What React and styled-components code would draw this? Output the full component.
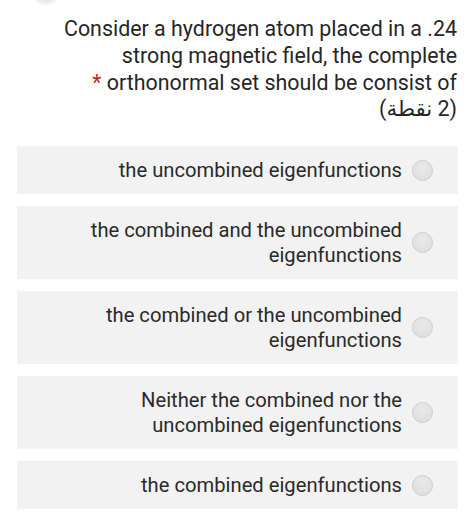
import React from 'react';
import styled, { createGlobalStyle } from 'styled-components';

const GlobalStyle = createGlobalStyle`
  html, body {
    margin: 0;
    padding: 0;
    background: #ffffff;
  }
  body {
    font-family: Roboto, "Noto Sans", Arial, sans-serif;
    color: #262626;
    overflow: hidden;
  }
`

export const Page = styled.div`
  width: 474px;
  height: 521px;
  box-sizing: border-box;
  padding: 0 16px 0 17px;
  display: flex;
  flex-direction: column;
`

// cut-off bottom of the radio above the question
export const PrevEdge = styled.div`
  width: 26px;
  height: 26px;
  margin: -22px 0 0 16px;
  border-radius: 50%;
  background: radial-gradient(circle at 50% 40%, #f1f1f1 0%, #e4e4e4 100%);
  filter: blur(1.5px);
`

export const Question = styled.div`
  margin-top: 12px;
  padding-right: 1px;
  text-align: right;
  font-size: 21.4px;
  line-height: 26.8px;
  color: #262626;
`

export const Star = styled.span`
  color: #c5221f;
`

export const Points = styled.div`
  direction: rtl;
  text-align: right;
  font-family: Roboto, "Noto Sans", "DejaVu Sans", sans-serif;
`

export const Options = styled.div`
  margin-top: 23px;
  display: flex;
  flex-direction: column;
  gap: 12px;
`

export const OptionCard = styled.label`
  display: flex;
  justify-content: flex-end;
  align-items: center;
  gap: 10px;
  padding: 11.5px 25px 11.5px 16px;
  background: #f2f2f2;
  cursor: pointer;
`

export const OptionText = styled.span`
  max-width: 335px;
  text-align: right;
  font-size: 20.2px;
  line-height: 25px;
  color: #2a2a2a;
`

export const Radio = styled.span`
  flex: none;
  width: 19px;
  height: 19px;
  border-radius: 50%;
  border: 1px solid #cdcdcd;
  background: radial-gradient(circle at 50% 35%, #e9e9e9 0%, #dcdcdc 100%);
`

const answers = [
  'the uncombined eigenfunctions',
  'the combined and the uncombined eigenfunctions',
  'the combined or the uncombined eigenfunctions',
  'Neither the combined nor the uncombined eigenfunctions',
  'the combined eigenfunctions',
];

export default function App() {
  return (
    <>
      <GlobalStyle />
      <Page>
        <PrevEdge />
        <Question>
          Consider a hydrogen atom placed in a .24<br />
          strong magnetic field, the complete<br />
          <Star>*</Star> orthonormal set should be consist of
          <Points>(2 نقطة)</Points>
        </Question>
        <Options>
          {answers.map((a) => (
            <OptionCard key={a}>
              <OptionText>{a}</OptionText>
              <Radio />
            </OptionCard>
          ))}
        </Options>
      </Page>
    </>
  );
}
